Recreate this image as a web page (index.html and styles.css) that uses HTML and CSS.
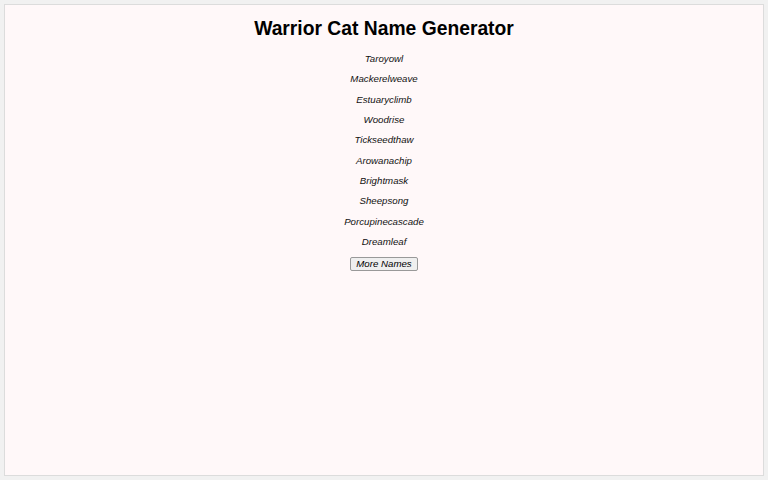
FILE: index.html
```html
<!DOCTYPE html>
<html lang="en">
<head>
    <meta charset="UTF-8">
    <title>Warrior Cat Name Generator</title>
    <meta name="viewport" content="width=device-width, initial-scale=1">
    <link rel="stylesheet" href="styles.css">
</head>
<body>
    <div class="container">
        <h1>Warrior Cat Name Generator</h1>
        <div class="names">
            <p class="name">Taroyowl</p>
            <p class="name">Mackerelweave</p>
            <p class="name">Estuaryclimb</p>
            <p class="name">Woodrise</p>
            <p class="name">Tickseedthaw</p>
            <p class="name">Arowanachip</p>
            <p class="name">Brightmask</p>
            <p class="name">Sheepsong</p>
            <p class="name">Porcupinecascade</p>
            <p class="name">Dreamleaf</p>
        </div>
        <button class="more-btn" type="button">More Names</button>
    </div>
</body>
</html>
```

FILE: styles.css
```css
html, body {
    height: 100%;
}
body {
    margin: 0;
    padding: 4px;
    box-sizing: border-box;
    background: #f1f1f1;
    font-family: "Liberation Sans", Arial, sans-serif;
}
.container {
    height: 100%;
    box-sizing: border-box;
    background: #fff8f9;
    border: 1px solid #dcdcdc;
    text-align: center;
    padding-top: 12px;
}
h1 {
    margin: 0 0 8px 0;
    font-size: 19.3px;
    line-height: 24px;
    font-weight: bold;
    color: #000;
}
.names {
    display: flex;
    flex-direction: column;
}
.name {
    margin: 0;
    font-size: 9.7px;
    font-style: italic;
    line-height: 20.35px;
    color: #111;
}
.more-btn {
    margin-top: 5px;
    font-family: "Liberation Sans", Arial, sans-serif;
    font-size: 9.7px;
    font-style: italic;
    line-height: 12px;
    padding: 0 5px;
    background: #efefef;
    border: 1px solid #999;
    border-radius: 2px;
    color: #000;
}
```
